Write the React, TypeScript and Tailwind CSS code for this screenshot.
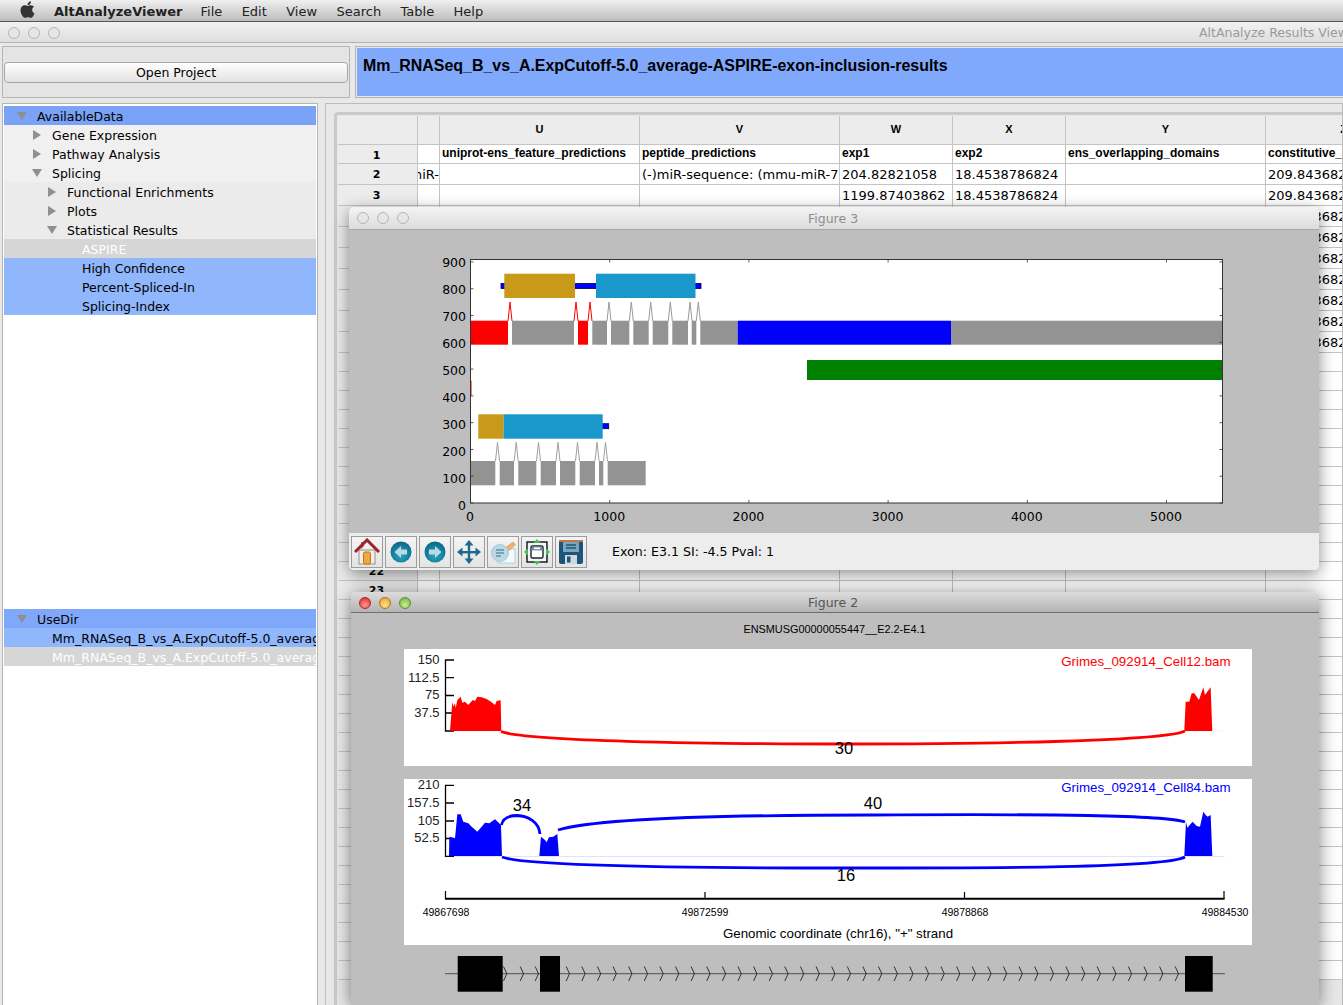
import { FaApple } from "react-icons/fa";

const menus = ["File", "Edit", "View", "Search", "Table", "Help"];

type TreeRow = { label: string; level: 0 | 1 | 2 | 3; arrow?: "open" | "closed"; tone: string };

const availableData: TreeRow[] = [
  { label: "AvailableData", level: 0, arrow: "open", tone: "bg-[#7aa2f6] text-black" },
  { label: "Gene Expression", level: 1, arrow: "closed", tone: "bg-[#f0f0f0] text-black" },
  { label: "Pathway Analysis", level: 1, arrow: "closed", tone: "bg-[#f0f0f0] text-black" },
  { label: "Splicing", level: 1, arrow: "open", tone: "bg-[#f0f0f0] text-black" },
  { label: "Functional Enrichments", level: 2, arrow: "closed", tone: "bg-[#ebebeb] text-black" },
  { label: "Plots", level: 2, arrow: "closed", tone: "bg-[#ebebeb] text-black" },
  { label: "Statistical Results", level: 2, arrow: "open", tone: "bg-[#ebebeb] text-black" },
  { label: "ASPIRE", level: 3, tone: "bg-[#d6d6d6] text-white" },
  { label: "High Confidence", level: 3, tone: "bg-[#90b6fb] text-black" },
  { label: "Percent-Spliced-In", level: 3, tone: "bg-[#90b6fb] text-black" },
  { label: "Splicing-Index", level: 3, tone: "bg-[#90b6fb] text-black" },
];

const useDir: TreeRow[] = [
  { label: "UseDir", level: 0, arrow: "open", tone: "bg-[#80a8fa] text-black" },
  { label: "Mm_RNASeq_B_vs_A.ExpCutoff-5.0_average-ASPIRE-exon-inclusion-results", level: 1, tone: "bg-[#90b6fb] text-black" },
  { label: "Mm_RNASeq_B_vs_A.ExpCutoff-5.0_average-ASPIRE-exon-inclusion-results", level: 1, tone: "bg-[#d6d6d6] text-white" },
];

const levelPad = ["pl-[12px]", "pl-[27px]", "pl-[42px]", "pl-[57px]"];

function TreeLine({ row }: { row: TreeRow }) {
  return (
    <div className={`flex items-center h-[19px] whitespace-nowrap overflow-hidden ${levelPad[row.level]} ${row.tone}`}>
      <span className="w-[21px] shrink-0 flex items-center">
        {row.arrow === "open" && (
          <svg width="10" height="9" viewBox="0 0 10 9" className="ml-[1px]">
            <polygon points="0,1 10,1 5,9" fill="#8f8f8f" />
          </svg>
        )}
        {row.arrow === "closed" && (
          <svg width="8" height="10" viewBox="0 0 8 10" className="ml-[2px]">
            <polygon points="0,0 8,5 0,10" fill="#8f8f8f" />
          </svg>
        )}
      </span>
      <span className="pt-[2px] leading-[15px]">{row.label}</span>
    </div>
  );
}

const colClass = ["w-[80px]", "w-[22px]", "w-[200px]", "w-[200px]", "w-[113px]", "w-[113px]", "w-[200px]", "w-[156px]"];
const headers = ["", "", "U", "V", "W", "X", "Y", "Z"];
const firstRow = ["", "uniprot-ens_feature_predictions", "peptide_predictions", "exp1", "exp2", "ens_overlapping_domains", "constitutive_exons"];

function cellsFor(n: number): string[] {
  if (n === 2) return ["miR-", "", "(-)miR-sequence: (mmu-miR-7a-5p)", "204.82821058", "18.4538786824", "", "209.84368246"];
  if (n === 3) return ["", "", "", "1199.87403862", "18.4538786824", "", "209.84368246"];
  if (n <= 10) return ["", "", "", "", "", "", "209.84368246"];
  return ["", "", "", "", "", "", ""];
}

const rowNums = Array.from({ length: 42 }, (_, i) => i + 2);

function GridTable() {
  return (
    <div className="w-[1011px] bg-white text-[13px] text-black">
      <div className="flex h-[29px]">
        {headers.map((h, i) => (
          <div
            key={i}
            className={`${colClass[i]} shrink-0 bg-[#ececec] border-r border-b border-[#c4c4c4] flex items-center justify-center pb-[2px] text-[11px] font-bold font-['Liberation_Sans',sans-serif]`}
          >
            {h}
          </div>
        ))}
      </div>
      <div className="flex h-[19px]">
        <div className="w-[80px] shrink-0 bg-[#ececec] border-r border-b border-[#c4c4c4] flex items-center justify-center pt-[4px] pr-[2px] text-[11px] font-bold">1</div>
        {firstRow.map((c, i) => (
          <div
            key={i}
            className={`${colClass[i + 1]} shrink-0 border-r border-b border-[#c4c4c4] pl-[2px] overflow-hidden whitespace-nowrap text-[12px] leading-[17px] font-bold font-['Liberation_Sans',sans-serif]`}
          >
            {c}
          </div>
        ))}
      </div>
      {rowNums.map((n) => (
        <div key={n} className={`flex ${n <= 10 ? "h-[21px]" : "h-[19px]"}`}>
          <div className="w-[80px] shrink-0 bg-[#ececec] border-r border-b border-[#c4c4c4] flex items-center justify-center pt-[3px] pr-[2px] text-[11px] font-bold">{n}</div>
          {cellsFor(n).map((c, i) => (
            <div
              key={i}
              className={`${colClass[i + 1]} shrink-0 border-r border-b border-[#c4c4c4] flex items-center overflow-hidden whitespace-nowrap pt-[1px] ${i === 0 ? "justify-end" : "pl-[2px]"}`}
            >
              {c}
            </div>
          ))}
        </div>
      ))}
    </div>
  );
}

function GrayLights() {
  return (
    <div className="flex gap-[8px]">
      <span className="w-[12px] h-[12px] rounded-full border border-[#b4b4b4] bg-[#e6e6e6]" />
      <span className="w-[12px] h-[12px] rounded-full border border-[#b4b4b4] bg-[#e6e6e6]" />
      <span className="w-[12px] h-[12px] rounded-full border border-[#b4b4b4] bg-[#e6e6e6]" />
    </div>
  );
}

// matplotlib toolbar glyphs
function HomeIcon() {
  return (
    <svg width="26" height="28" viewBox="0 0 26 28">
      <path d="M7 4h3v4l-3 3z" fill="#a86a4a" />
      <rect x="5" y="12" width="16" height="14" fill="#f3efe6" stroke="#9a8f80" />
      <rect x="9.5" y="14" width="7" height="12" rx="1.5" fill="#f2a93c" stroke="#b8761c" />
      <path d="M1 14 13 2l12 12" fill="none" stroke="#9c2230" strokeWidth="3" />
    </svg>
  );
}

function ArrowBall({ dir }: { dir: "left" | "right" }) {
  return (
    <svg width="24" height="24" viewBox="0 0 24 24">
      <defs>
        <radialGradient id={`ball-${dir}`} cx="50%" cy="65%" r="60%">
          <stop offset="0%" stopColor="#2aa8c4" />
          <stop offset="100%" stopColor="#0c6a8a" />
        </radialGradient>
      </defs>
      <circle cx="12" cy="12" r="10.5" fill={`url(#ball-${dir})`} />
      {dir === "left" ? (
        <path d="M5.5 12 12 6v3.5h6v5h-6V18z" fill="#b6dbe6" />
      ) : (
        <path d="M18.5 12 12 6v3.5H6v5h6V18z" fill="#b6dbe6" />
      )}
    </svg>
  );
}

function PanIcon() {
  return (
    <svg width="26" height="26" viewBox="0 0 26 26" fill="#1f6a8c">
      <rect x="4" y="12" width="18" height="2.4" />
      <rect x="11.8" y="4" width="2.4" height="18" />
      <polygon points="13,1 17.5,6.5 8.5,6.5" />
      <polygon points="13,25 17.5,19.5 8.5,19.5" />
      <polygon points="1,13 6.5,8.5 6.5,17.5" />
      <polygon points="25,13 19.5,8.5 19.5,17.5" />
    </svg>
  );
}

function SubplotIcon() {
  return (
    <svg width="26" height="26" viewBox="0 0 26 26">
      <rect x="8" y="10" width="17" height="14" fill="#f4fafc" stroke="#a8d4e4" />
      <path d="M14 10 23 3l2.5 2.5-8 7.5z" fill="#f0b070" stroke="#d89048" strokeWidth=".6" />
      <circle cx="10" cy="14" r="8.5" fill="#bcd8e4" stroke="#a8cad8" />
      <path d="M6 11h8M6 14h8M6 17h5" stroke="#5e93ac" strokeWidth="1.3" />
    </svg>
  );
}

function ZoomRectIcon() {
  return (
    <svg width="26" height="26" viewBox="0 0 26 26">
      <rect x="3" y="3" width="20" height="20" fill="#eef3f6" stroke="#111" strokeWidth="1.4" />
      <rect x="7" y="7" width="12" height="12" rx="1.5" fill="#fff" stroke="#222" strokeWidth="1.4" />
      <rect x="8" y="7.5" width="10" height="4" fill="#6f93b4" />
      <rect x="10" y="8.5" width="6" height="1.6" fill="#fff" />
      <polygon points="13,0 16.5,4 9.5,4" fill="#44c24a" />
      <polygon points="13,26 16.5,22 9.5,22" fill="#44c24a" />
      <polygon points="0,13 4,9.5 4,16.5" fill="#44c24a" />
      <polygon points="26,13 22,9.5 22,16.5" fill="#44c24a" />
    </svg>
  );
}

function SaveIcon() {
  return (
    <svg width="26" height="26" viewBox="0 0 26 26">
      <path d="M1 3a2 2 0 0 1 2-2h20a2 2 0 0 1 2 2v20a2 2 0 0 1-2 2H3a2 2 0 0 1-2-2z" fill="#1c5578" />
      <rect x="1" y="1" width="24" height="2" fill="#c07a48" />
      <rect x="5" y="3" width="16" height="10" fill="#7ea4bc" />
      <path d="M8 6h10M8 9h10" stroke="#1c5578" strokeWidth="1.3" />
      <rect x="7" y="16" width="12" height="9" fill="#cfd8dd" />
      <rect x="9" y="17.5" width="3.5" height="6" fill="#1c5578" />
    </svg>
  );
}

const toolButtons = [
  <HomeIcon key="home" />,
  <ArrowBall key="back" dir="left" />,
  <ArrowBall key="forward" dir="right" />,
  <PanIcon key="pan" />,
  <SubplotIcon key="subplots" />,
  <ZoomRectIcon key="zoom" />,
  <SaveIcon key="save" />,
];

// [start, end] of each exon block in the two transcript rows
const topExons: [number, number, string][] = [
  [470.7, 508, "#ff0000"],
  [512, 574, "#939393"],
  [578, 588, "#ff0000"],
  [592.3, 607, "#939393"],
  [611, 629.3, "#939393"],
  [633.3, 648.7, "#939393"],
  [652.7, 668.3, "#939393"],
  [672.3, 688, "#939393"],
  [691.7, 696.3, "#939393"],
  [700.3, 737.7, "#939393"],
  [737.7, 951, "#0000ff"],
  [951, 1222, "#939393"],
];
const topPeaks: [number, string][] = [
  [510, "#ff0000"],
  [576, "#ff0000"],
  [590, "#ff0000"],
  [609, "#9a9a9a"],
  [631.3, "#9a9a9a"],
  [650.7, "#9a9a9a"],
  [670.3, "#9a9a9a"],
  [690, "#9a9a9a"],
  [698.3, "#9a9a9a"],
];
const lowExons: [number, number][] = [
  [470.7, 495.3],
  [499.7, 514],
  [518.3, 536.3],
  [540.7, 556],
  [560, 575.3],
  [579.7, 595],
  [599, 603.3],
  [607.7, 645.7],
];
const lowPeaks = [497.5, 516.2, 538.5, 558, 577.5, 597, 605.5];
const yTicks = [900, 800, 700, 600, 500, 400, 300, 200, 100, 0];
const xTicks = [0, 1000, 2000, 3000, 4000, 5000];

function ExonChart() {
  const xPos = (v: number) => 470.5 + v * 0.1392;
  const yPos = (v: number) => 503 - v * 0.2678;
  return (
    <svg width="970" height="303" viewBox="349 230 970 303" className="block">
      <rect x="470.5" y="259.5" width="752" height="243.5" fill="#fff" />
      <rect x="501" y="283.5" width="200" height="5" fill="#0000ff" stroke="#00003a" strokeWidth=".8" />
      <rect x="504.3" y="273.7" width="70.7" height="24.3" fill="#c9991a" />
      <rect x="596" y="273.7" width="99.5" height="24.3" fill="#1a98cb" />
      {topExons.map(([a, b, c]) => (
        <rect key={a} x={a} y="320.7" width={b - a} height="24" fill={c} />
      ))}
      {topPeaks.map(([x, c]) => (
        <path key={x} d={`M${x - 2} 321 L${x} 302 L${x + 2} 321`} fill="none" stroke={c} strokeWidth="1" />
      ))}
      <rect x="807" y="360" width="415" height="20" fill="#008000" />
      <rect x="470" y="380.7" width="1.5" height="15.3" fill="#c01020" />
      <rect x="600" y="423.7" width="8.7" height="5" fill="#0000ff" stroke="#00003a" strokeWidth=".8" />
      <rect x="478.3" y="414.3" width="25.4" height="24.4" fill="#c9991a" />
      <rect x="503.7" y="414.3" width="99" height="24.4" fill="#1a98cb" />
      {lowExons.map(([a, b]) => (
        <rect key={a} x={a} y="461" width={b - a} height="24.3" fill="#939393" />
      ))}
      {lowPeaks.map((x) => (
        <path key={x} d={`M${x - 2} 461 L${x} 442.3 L${x + 2} 461`} fill="none" stroke="#a0a0a0" strokeWidth="1" />
      ))}
      <rect x="470.5" y="259.5" width="752" height="243.5" fill="none" stroke="#333" strokeWidth="1" />
      {xTicks.map((v) => (
        <path key={v} d={`M${xPos(v)} 503v-3M${xPos(v)} 259.5v3`} stroke="#333" strokeWidth=".8" />
      ))}
      {yTicks.map((v) => (
        <path key={v} d={`M470.5 ${yPos(v)}h3M1222.5 ${yPos(v)}h-3`} stroke="#333" strokeWidth=".8" />
      ))}
      <g className="font-['DejaVu_Sans',sans-serif] text-[12.5px]" fill="#000">
        {yTicks.map((v) => (
          <text key={v} x="466" y={505 - v * 0.27 + 4.5} textAnchor="end">
            {v}
          </text>
        ))}
        {xTicks.map((v) => (
          <text key={v} x={470 + v * 0.1392} y="521" textAnchor="middle">
            {v}
          </text>
        ))}
      </g>
    </svg>
  );
}

const chevrons = Array.from({ length: 40 }, (_, i) => 567.7 + i * 15.615);

function SashimiChart() {
  return (
    <svg width="968" height="392" viewBox="351 613 968 392" className="block">
      <g className="font-['Liberation_Sans',sans-serif]">
        <text x="834.5" y="633" textAnchor="middle" fontSize="10.9" fill="#000">
          ENSMUSG00000055447__E2.2-E4.1
        </text>
        <rect x="404" y="649" width="848" height="117" fill="#fff" />
        <rect x="404" y="779" width="848" height="166" fill="#fff" />

        {/* upper sample */}
        <path d="M445.5 731h779" stroke="#fff0f0" />
        <path d="M454 660h-8.5v71h8.5M446 677.7h8M446 695.5h8M446 713h8" fill="none" stroke="#000" strokeWidth="1.3" />
        <g transform="translate(400 640) scale(.3333)" fill="#ff0000">
          <polygon points="150,273 157,185 160,200 165,190 167,205 172,180 182,170 187,188 195,185 205,195 218,180 225,183 232,170 245,172 260,177 275,187 285,195 290,183 302,181 304,273" />
        </g>
        <g transform="translate(1000 640) scale(.3333)" fill="#ff0000">
          <polygon points="553,273 557,185 568,185 575,160 583,160 597,180 610,142 615,165 622,155 632,142 637,273" />
        </g>
        <path d="M501 731.5C525 741 700 744 843 744 990 744 1165 741 1185 731" fill="none" stroke="#ff0000" strokeWidth="2.8" />
        {[["150", 663.5], ["112.5", 681.5], ["75", 698.5], ["37.5", 717]].map(([t, y]) => (
          <text key={t} x="439.5" y={y} textAnchor="end" fontSize="13" fill="#222">
            {t}
          </text>
        ))}
        <text x="844" y="754" textAnchor="middle" fontSize="16.5" fill="#000">30</text>
        <text x="1230.5" y="666" textAnchor="end" fontSize="13.3" fill="#ff0000">Grimes_092914_Cell12.bam</text>

        {/* lower sample */}
        <path d="M445.5 856.5h779" stroke="#e2e2ff" />
        <path d="M454 785.3h-8.5v71h8.5M446 803h8M446 821h8M446 838.5h8" fill="none" stroke="#000" strokeWidth="1.3" />
        <g transform="translate(400 640) scale(.3333)" fill="#0000ff">
          <polygon points="147,648 148,590 165,595 172,523 182,523 190,545 205,550 215,560 232,575 245,560 255,548 268,550 285,538 303,555 306,648" />
          <polygon points="418,648 423,590 435,600 440,607 447,592 460,590 472,582 477,648" />
        </g>
        <g transform="translate(1000 640) scale(.3333)" fill="#0000ff">
          <polygon points="553,648 558,545 562,563 578,545 590,558 600,560 610,515 617,525 623,530 632,525 637,648" />
        </g>
        <g fill="none" stroke="#0000ff" strokeWidth="2.8">
          <path d="M501.5 825C503 818 510 815.5 517 815.5 528 816 539 822 540 834" />
          <path d="M558 830C590 820 700 815 872 815 1050 814 1165 815 1185 822" />
          <path d="M502 857C525 866 700 868 845 868 990 868 1165 868 1185 857" />
        </g>
        {[["210", 788.5], ["157.5", 806.5], ["105", 824.5], ["52.5", 842]].map(([t, y]) => (
          <text key={t} x="439.5" y={y} textAnchor="end" fontSize="13" fill="#222">
            {t}
          </text>
        ))}
        <text x="522" y="811" textAnchor="middle" fontSize="16.5" fill="#000">34</text>
        <text x="873" y="809" textAnchor="middle" fontSize="16.5" fill="#000">40</text>
        <text x="846" y="881" textAnchor="middle" fontSize="16.5" fill="#000">16</text>
        <text x="1230.5" y="792" textAnchor="end" fontSize="13.3" fill="#0000ff">Grimes_092914_Cell84.bam</text>

        {/* coordinate axis */}
        <path d="M445.5 891v8M705 892v7M964.5 892v7M1224 891v8" stroke="#000" strokeWidth="1.2" />
        <path d="M445 898.7h779.5" stroke="#000" strokeWidth="2" />
        {[["49867698", 446], ["49872599", 705], ["49878868", 965], ["49884530", 1225]].map(([t, x]) => (
          <text key={t} x={x} y="915.5" textAnchor="middle" fontSize="10.5" fill="#000">
            {t}
          </text>
        ))}
        <text x="838" y="938" textAnchor="middle" fontSize="13.3" fill="#000">
          Genomic coordinate (chr16), "+" strand
        </text>

        {/* gene model */}
        <path d="M445 973.7h780" stroke="#666" strokeWidth="1.2" />
        {[505, 521.7, 536.7, ...chevrons].map((x) => (
          <path key={x} d={`M${x - 1.5} 966.5L${x + 1.8} 973.7 ${x - 1.5} 981`} fill="none" stroke="#222" strokeWidth=".9" />
        ))}
        <rect x="457.7" y="956" width="45" height="35.7" fill="#000" />
        <rect x="540" y="956" width="20" height="35.7" fill="#000" />
        <rect x="1185" y="956" width="27.7" height="35.7" fill="#000" />
      </g>
    </svg>
  );
}

export default function App() {
  return (
    <div className="relative w-[1343px] h-[1005px] overflow-hidden bg-[#e8e8e8] font-['DejaVu_Sans',sans-serif] text-[12.5px] text-black">
      {/* menu bar */}
      <div className="flex items-center h-[22px] bg-gradient-to-b from-[#f0f0f0] to-[#bdbdbd] border-b border-[#555] text-[#222] text-[13px]">
        <FaApple className="ml-[19px] w-[17px] h-[19px] text-[#333] -mt-[3px] shrink-0" />
        <span className="ml-[18px] pt-[2px] font-bold">AltAnalyzeViewer</span>
        <div className="flex gap-[19.4px] ml-[18px] pt-[2px]">
          {menus.map((m) => (
            <span key={m}>{m}</span>
          ))}
        </div>
      </div>

      {/* main window title bar */}
      <div className="flex items-center justify-between h-[21px] bg-gradient-to-b from-[#f2f2f2] to-[#dedede] border-b border-[#b4b4b4] pl-[8px] pt-[1px] whitespace-nowrap overflow-hidden">
        <GrayLights />
        <span className="text-[#9a9a9a] w-[144px] shrink-0 overflow-hidden pt-[2px]">AltAnalyze Results Viewer</span>
      </div>

      {/* top strip */}
      <div className="flex gap-[5px] pl-[2px] h-[52px] mt-[3px]">
        <div className="flex items-center w-[348px] shrink-0 border border-[#b5b5b5] bg-[#e4e4e4] px-[1px]">
          <button className="w-full h-[21px] rounded-[4px] border border-[#a6a6a6] bg-gradient-to-b from-white to-[#e2e2e2] pt-[1px] text-[12.5px]">
            Open Project
          </button>
        </div>
        <div className="w-[1000px] shrink-0 border border-[#b5b5b5] p-[1px]">
          <div className="h-full bg-[#80a8fb] pl-[6px] pt-[8px] text-[15.95px] leading-[20px] font-bold font-['Liberation_Sans',sans-serif] whitespace-nowrap">
            Mm_RNASeq_B_vs_A.ExpCutoff-5.0_average-ASPIRE-exon-inclusion-results
          </div>
        </div>
      </div>

      {/* content */}
      <div className="flex pl-[2px] mt-[5px] h-[903px]">
        <div className="flex flex-col w-[316px] shrink-0 border border-[#b5b5b5] p-[1px] pt-[2px] bg-white">
          {availableData.map((r) => (
            <TreeLine key={r.label} row={r} />
          ))}
          <div className="h-[294px] shrink-0" />
          {useDir.map((r, i) => (
            <TreeLine key={i} row={r} />
          ))}
        </div>
        <div className="ml-[7px] flex-1 border border-[#bcbcbc] pl-[8px] pt-[8px] bg-[#e8e8e8] min-w-0">
          <div className="h-full border-l-[3px] border-t-[3px] border-[#cacaca] rounded-tl-[4px] pl-[1px] pt-[1px] overflow-hidden">
            <GridTable />
          </div>
        </div>
      </div>

      {/* Figure 3 window */}
      <div className="absolute left-[349px] top-[207px] w-[970px] h-[363px] rounded-[5px] overflow-hidden shadow-[0_4px_16px_rgba(0,0,0,0.45)] flex flex-col">
        <div className="h-[23px] shrink-0 flex items-center pl-[8px] bg-gradient-to-b from-[#f4f4f4] to-[#dcdcdc] border-b border-[#a8a8a8]">
          <GrayLights />
          <span className="ml-[399px] pt-[3px] text-[#8e8e8e]">Figure 3</span>
        </div>
        <div className="bg-[#bebebe] h-[303px] shrink-0">
          <ExonChart />
        </div>
        <div className="flex-1 flex items-center bg-[#ededed] pl-[2px]">
          <div className="flex gap-[2px]">
            {toolButtons.map((b, i) => (
              <div key={i} className="flex items-center justify-center w-[32px] h-[32px] border border-[#9c9c9c] bg-gradient-to-b from-[#f4f4f4] to-[#e4e4e4]">
                {b}
              </div>
            ))}
          </div>
          <span className="ml-[25px] pt-[2px] text-[12.6px]">Exon: E3.1 SI: -4.5 Pval: 1</span>
        </div>
      </div>

      {/* Figure 2 window */}
      <div className="absolute left-[351px] top-[592px] w-[968px] h-[413px] rounded-t-[5px] overflow-hidden shadow-[0_2px_18px_rgba(0,0,0,0.5)] flex flex-col">
        <div className="h-[21px] shrink-0 flex items-center pl-[8px] pt-[2px] bg-gradient-to-b from-[#dcdcdc] to-[#b4b4b4] border-b border-[#6e6e6e]">
          <div className="flex gap-[8px]">
            <span className="w-[12px] h-[12px] rounded-full border border-[#a03030] bg-[radial-gradient(circle_at_50%_70%,#ff9a90,#e02020)]" />
            <span className="w-[12px] h-[12px] rounded-full border border-[#a87818] bg-[radial-gradient(circle_at_50%_70%,#ffe090,#e09a20)]" />
            <span className="w-[12px] h-[12px] rounded-full border border-[#5e8a2c] bg-[radial-gradient(circle_at_50%_70%,#c8f09a,#6cae30)]" />
          </div>
          <span className="ml-[397px] pt-[1px] text-[#555]">Figure 2</span>
        </div>
        <div className="bg-[#bebebe] flex-1 min-h-0">
          <SashimiChart />
        </div>
      </div>
    </div>
  );
}
